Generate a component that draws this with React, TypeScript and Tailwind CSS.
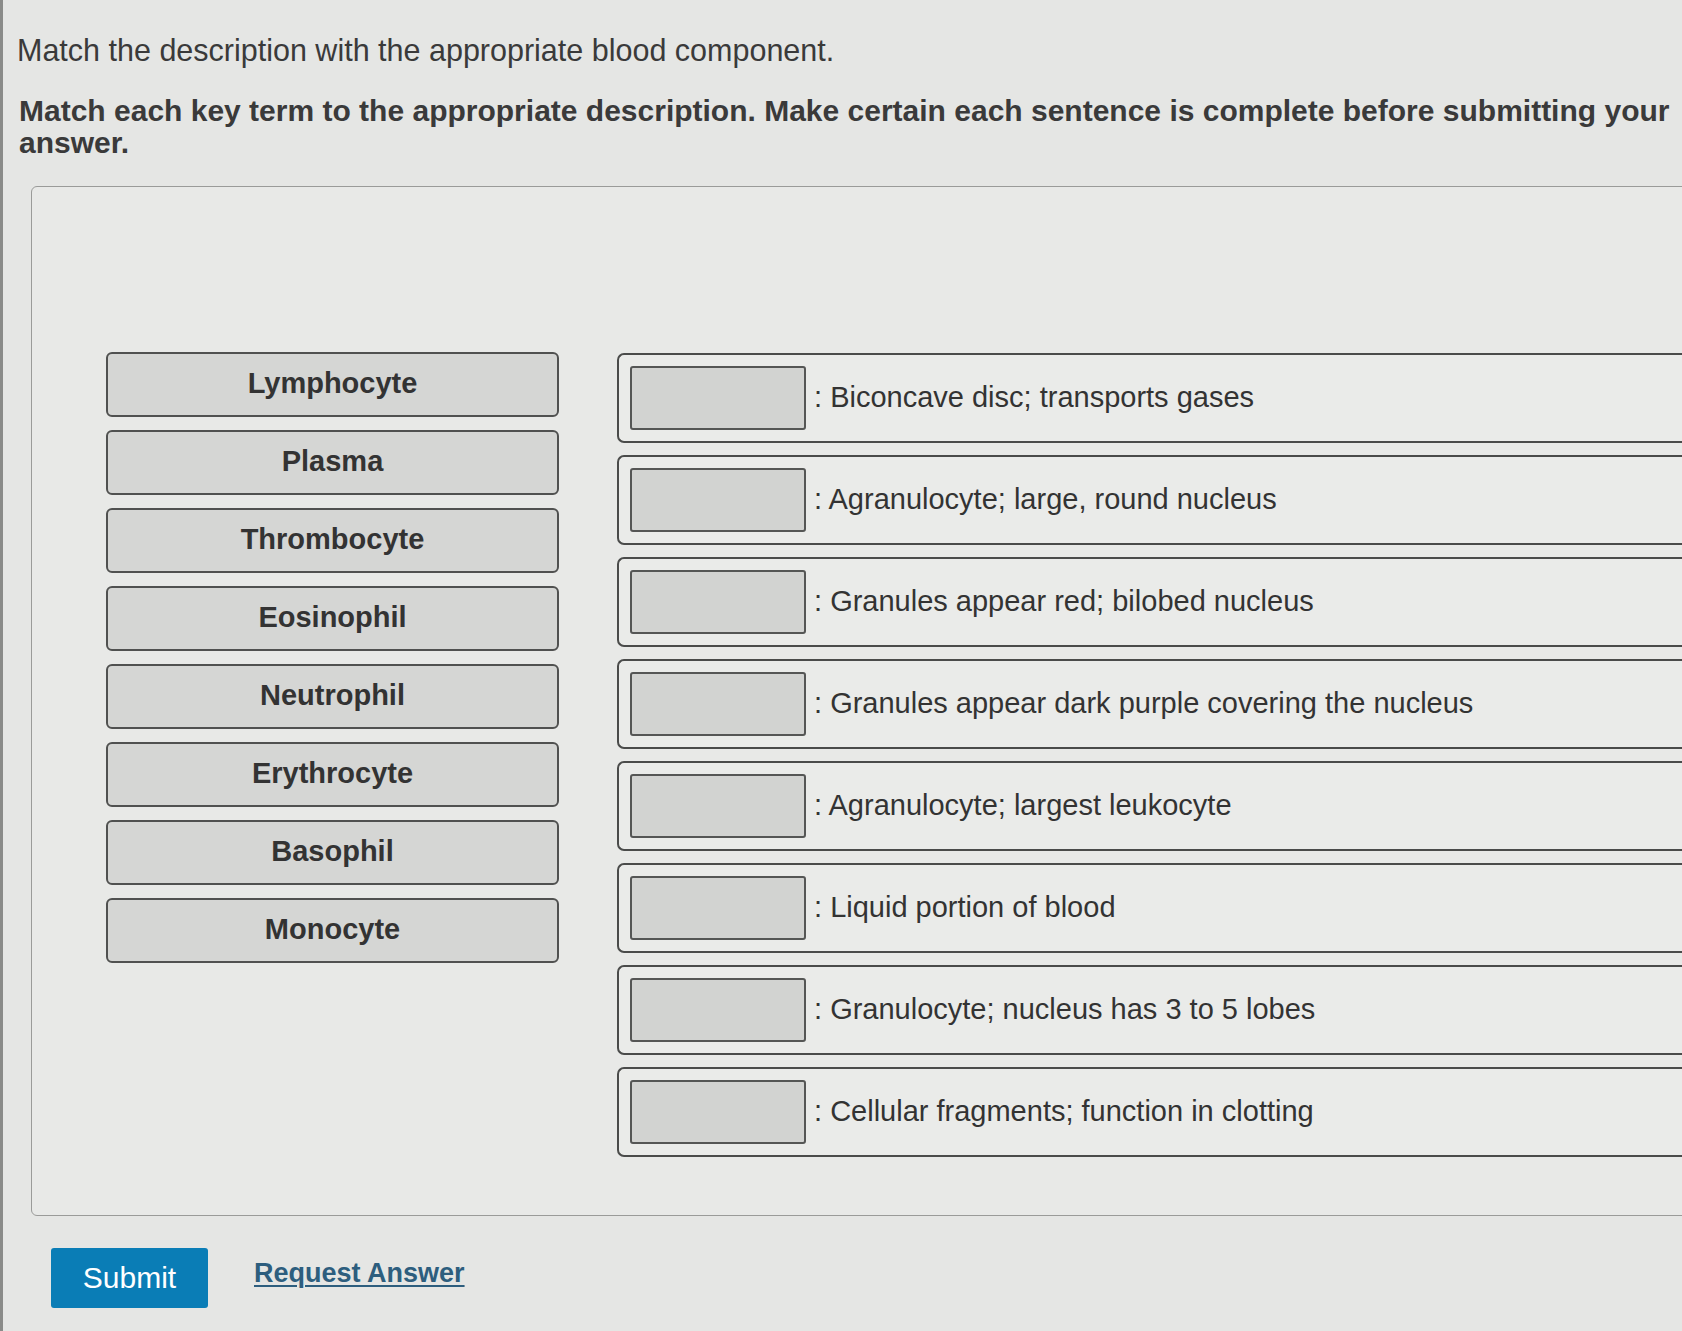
import React from "react";

const terms = [
  "Lymphocyte",
  "Plasma",
  "Thrombocyte",
  "Eosinophil",
  "Neutrophil",
  "Erythrocyte",
  "Basophil",
  "Monocyte",
];

const descriptions = [
  "Biconcave disc; transports gases",
  "Agranulocyte; large, round nucleus",
  "Granules appear red; bilobed nucleus",
  "Granules appear dark purple covering the nucleus",
  "Agranulocyte; largest leukocyte",
  "Liquid portion of blood",
  "Granulocyte; nucleus has 3 to 5 lobes",
  "Cellular fragments; function in clotting",
];

export default function App() {
  return (
    <div
      className="w-[1682px] h-[1331px] overflow-hidden bg-[#e5e6e4] border-l-[3px] border-[#8a8b89] pl-[14px] pt-[32px] text-[#333333]"
      style={{ fontFamily: '"Liberation Sans", Arial, sans-serif' }}
    >
      <h1 className="text-[30.5px] leading-[36px] font-normal text-[#3a3a3a]">
        Match the description with the appropriate blood component.
      </h1>
      <p className="mt-[27px] ml-[2px] text-[30px] leading-[32px] font-bold text-[#3a3a3a] whitespace-nowrap">
        Match each key term to the appropriate description. Make certain each sentence is complete before submitting your
        <br />
        answer.
      </p>

      <div className="mt-[27px] ml-[14px] w-[1700px] h-[1030px] border border-[#9a9b99] rounded-[6px] bg-[#e8e9e7] pl-[74px] pt-[165px] flex gap-[58px]">
        <div className="flex flex-col gap-[13px] w-[453px] shrink-0">
          {terms.map((t) => (
            <div
              key={t}
              className="h-[65px] rounded-[6px] border-2 border-[#505150] bg-[#d5d6d4] flex items-center justify-center pb-[2px] text-[29px] font-bold text-[#333333]"
            >
              {t}
            </div>
          ))}
        </div>
        <div className="flex flex-col gap-[12px] flex-1 pt-[1px]">
          {descriptions.map((d) => (
            <div
              key={d}
              className="h-[90px] rounded-l-[7px] border-2 border-r-0 border-[#4a4b4a] bg-[#eaebe9] flex items-center pl-[11px] pr-0"
            >
              <div className="w-[176px] h-[64px] rounded-[3px] border-2 border-[#555655] bg-[#d2d3d1] shrink-0" />
              <span className="ml-[8px] text-[29px] text-[#333333] whitespace-nowrap">
                : {d}
              </span>
            </div>
          ))}
        </div>
      </div>

      <div className="mt-[32px] ml-[34px] flex items-center gap-[46px]">
        <button className="w-[157px] h-[60px] rounded-[3px] bg-[#0a7db6] text-white text-[30px] leading-none">
          Submit
        </button>
        <a className="text-[27px] font-bold text-[#2d5e7e] underline underline-offset-[3px] decoration-2 mb-[10px] cursor-pointer">
          Request Answer
        </a>
      </div>
    </div>
  );
}
